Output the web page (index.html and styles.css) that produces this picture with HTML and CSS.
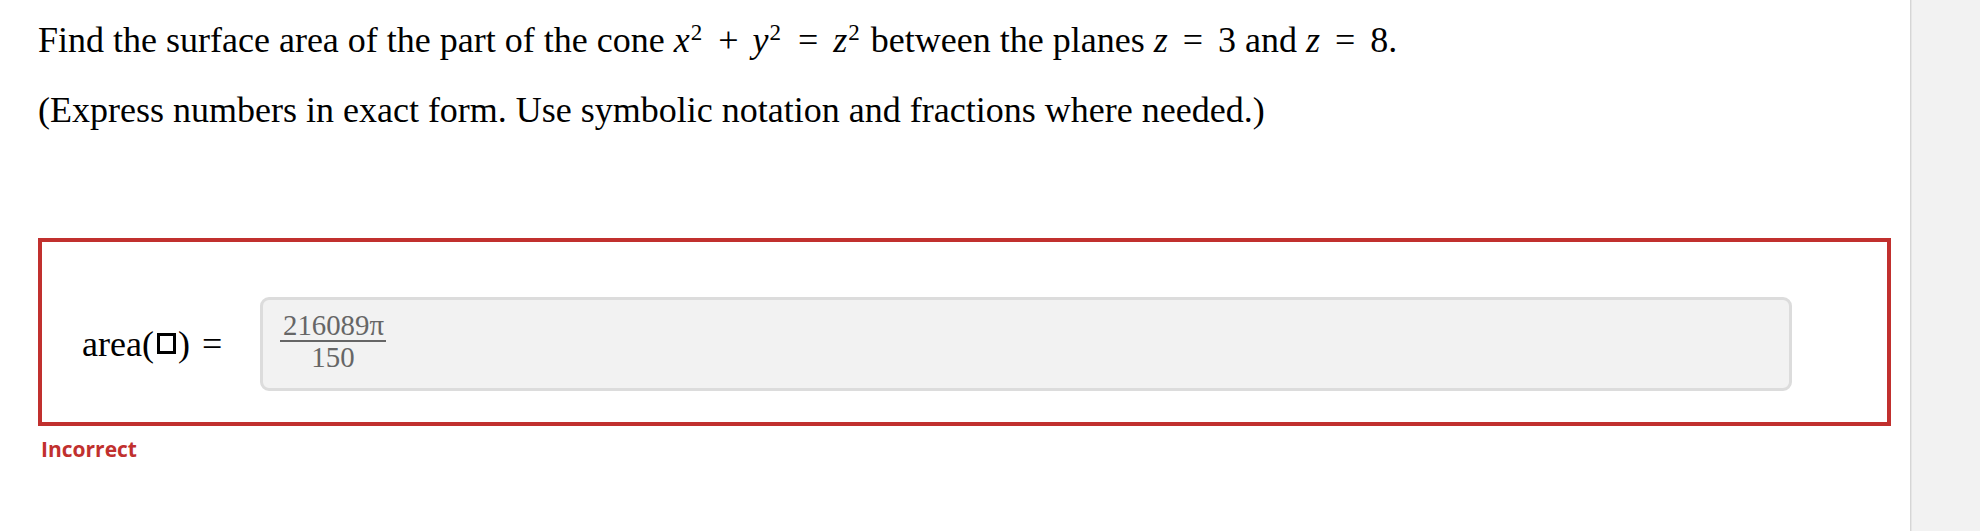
FILE: index.html
```html
<!DOCTYPE html>
<html lang="en">
<head>
<meta charset="utf-8">
<title>Surface area of a cone</title>
<link rel="stylesheet" href="styles.css">
</head>
<body>
<div class="page">
  <main class="content">
    <p class="question">Find the surface area of the part of the cone <span class="math"><i>x</i><sup>2</sup><span class="bin">+</span><i>y</i><sup>2</sup><span class="rel">=</span><i>z</i><sup>2</sup></span> between the planes <span class="math"><i>z</i><span class="rel">=</span>3</span> and <span class="math"><i>z</i><span class="rel">=</span>8</span>.</p>
    <p class="note">(Express numbers in exact form. Use symbolic notation and fractions where needed.)</p>
    <section class="answer-box">
      <div class="answer-row">
        <div class="label">area(<span class="placeholder"></span>)<span class="rel">=</span></div>
        <div class="input">
          <div class="frac">
            <span class="num">216089π</span>
            <span class="den">150</span>
          </div>
        </div>
      </div>
    </section>
    <div class="feedback">Incorrect</div>
  </main>
  <aside class="scroll-track"></aside>
</div>
</body>
</html>
```

FILE: styles.css
```css
html, body {
  margin: 0;
  padding: 0;
  background: #fff;
}

.page {
  display: flex;
  min-height: 531px;
}

.content {
  flex: 1;
  padding: 18px 19px 0 38px;
  font-family: "Liberation Serif", "Times New Roman", serif;
  color: #000;
}

.question,
.note {
  margin: 0;
  font-size: 36px;
  line-height: 44px;
}

.note {
  margin-top: 26px;
}

.math i {
  font-style: italic;
}

sup {
  font-size: 23px;
  line-height: 0;
  vertical-align: 12px;
  margin: 0 2px 0 1px;
}

.bin {
  margin: 0 14px;
}

.rel {
  margin: 0 15px;
}

.answer-box {
  margin-top: 106px;
  border: 4px solid #c1302e;
  padding: 55px 95px 31px 40px;
}

.answer-row {
  display: flex;
  align-items: center;
}

.label {
  flex-shrink: 0;
  width: 178px;
  font-size: 36px;
  line-height: 44px;
  white-space: nowrap;
}

.label .rel {
  margin: 0 0 0 12px;
}

.placeholder {
  display: inline-block;
  box-sizing: border-box;
  width: 19px;
  height: 21px;
  border: 3.5px solid #000;
  margin: 0 2px 2px 3px;
  vertical-align: baseline;
}

.input {
  flex: 1;
  box-sizing: border-box;
  height: 94px;
  border: 3px solid #dcdcdc;
  border-radius: 9px;
  background: #f2f2f2;
  padding: 11px 0 0 17px;
}

.frac {
  display: inline-flex;
  flex-direction: column;
  align-items: center;
  color: #666;
  font-size: 28.8px;
  line-height: 28.8px;
}

.num {
  padding: 0 2px 0 3px;
  border-bottom: 2px solid #666;
}

.den {
  padding-top: 1px;
}

.feedback {
  margin-top: 9px;
  margin-left: 3px;
  font-family: "Open Sans", "Liberation Sans", sans-serif;
  font-weight: 700;
  font-size: 21px;
  line-height: 28px;
  color: #c1302e;
}

.scroll-track {
  width: 70px;
  flex-shrink: 0;
  background: #f2f2f2;
  box-shadow: inset 1px 0 0 #d6d6d6, inset 2px 0 0 #e6e6e6;
}
```
